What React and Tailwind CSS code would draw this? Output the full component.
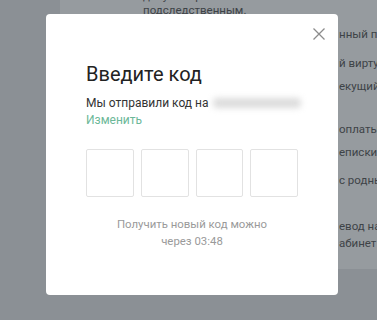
import React from 'react';

const sideLines = [
  { text: 'нный по', mt: 'mt-[13px]' },
  { text: 'й вирту', mt: 'mt-[15px]' },
  { text: 'екущий', mt: 'mt-[9px]' },
  { text: 'оплаты', mt: 'mt-[29px]' },
  { text: 'еписки', mt: 'mt-[9px]' },
  { text: 'с родны', mt: 'mt-[14px]' },
  { text: 'евод на', mt: 'mt-[32px]' },
  { text: 'абинет', mt: 'mt-[3px]' },
];

export default function App() {
  return (
    <div
      className="relative h-[320px] w-[377px] overflow-hidden bg-[#8b9095]"
      style={{ fontFamily: 'Roboto, "Noto Sans", sans-serif' }}
    >
      {/* page behind the overlay */}
      <div className="ml-[60px] h-[280px] bg-[#969b9f] text-[11.5px] leading-[14px] text-[#3e4347]">
        <div className="-mt-[11px] pl-[83px]">
          <div className="whitespace-nowrap">делу потерпевшим или</div>
          <div className="whitespace-nowrap">подследственным.</div>
        </div>
        <div className="-mt-[3px] ml-[279px] overflow-hidden whitespace-nowrap">
          {sideLines.map((l) => (
            <div key={l.text} className={l.mt}>
              {l.text}
            </div>
          ))}
        </div>
      </div>

      {/* modal */}
      <div className="absolute left-[46px] top-[14px] h-[281px] w-[292px] rounded-[4px] bg-white px-[40px] pt-[48px]">
        <button className="absolute right-[13px] top-[14px] text-[#8c8c8c]">
          <svg width="12" height="12" viewBox="0 0 12 12" fill="none" stroke="currentColor" strokeWidth="1.3">
            <path d="M0.5 0.5 L11.5 11.5 M11.5 0.5 L0.5 11.5" />
          </svg>
        </button>

        <h2 className="text-[20px] leading-[24px] font-normal text-[#222]">Введите код</h2>

        <p className="mt-[9px] whitespace-nowrap text-[12px] leading-[16px] text-[#333]">
          Мы отправили код на
          <span className="ml-[4px] inline-block h-[10px] w-[88px] rounded-[4px] bg-[#dcdcdc] align-[-1px] blur-[3px]" />
        </p>
        <div className="mt-[1px] text-[12px] leading-[16px] text-[#6cb898]">Изменить</div>

        <div className="mt-[21px] flex gap-[7px]">
          {[0, 1, 2, 3].map((i) => (
            <div key={i} className="h-[48px] w-[48px] rounded-[2px] border border-[#e2e2e2]" />
          ))}
        </div>

        <div className="mt-[19px] text-center text-[11.4px] leading-[17px] text-[#9a9a9a]">
          <div>Получить новый код можно</div>
          <div>через 03:48</div>
        </div>
      </div>
    </div>
  );
}
